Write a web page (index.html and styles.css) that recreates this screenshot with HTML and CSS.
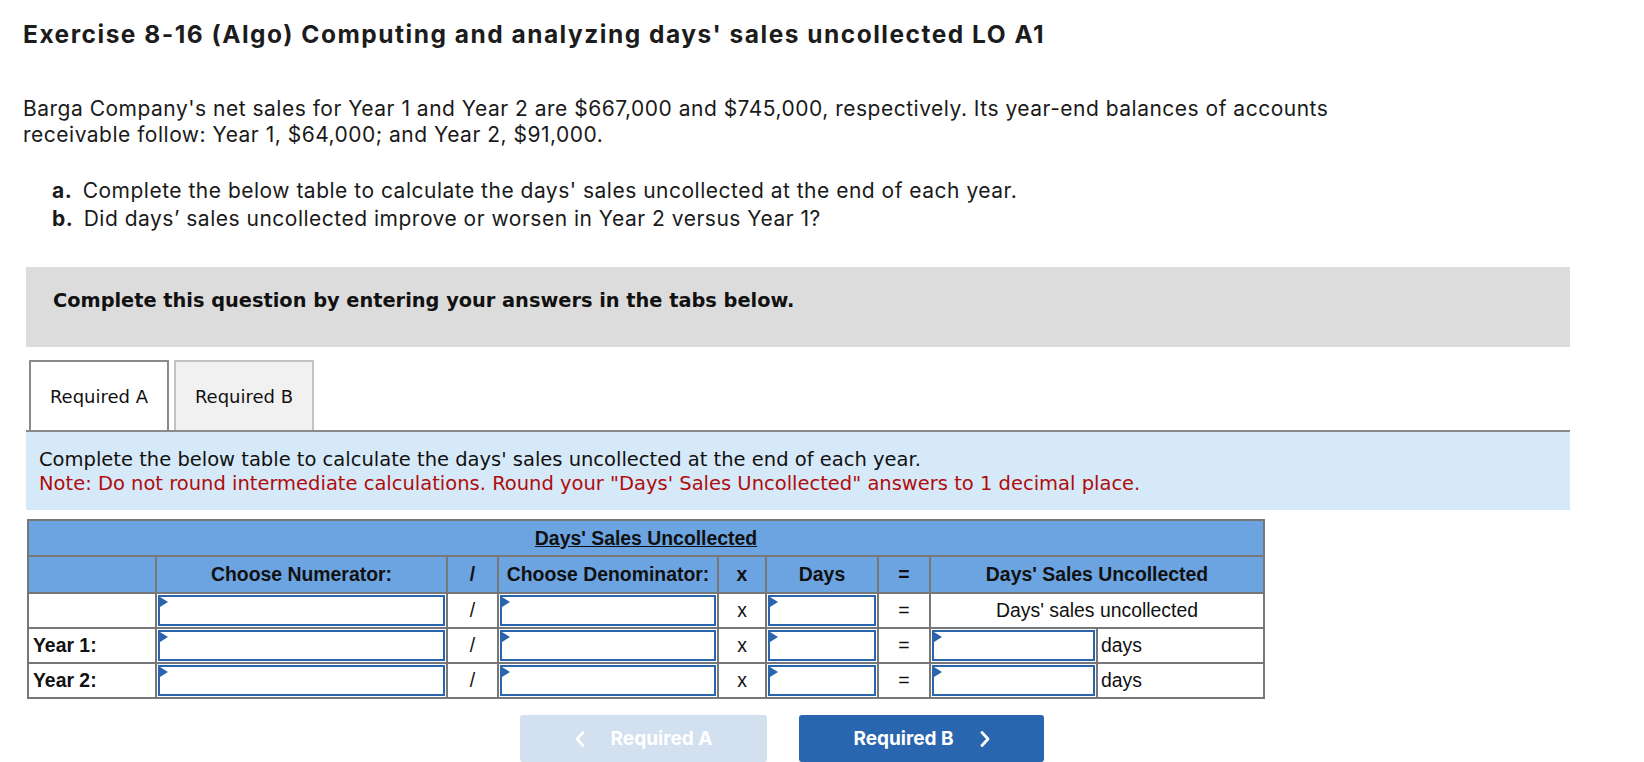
FILE: index.html
```html
<!DOCTYPE html>
<html>
<head>
<meta charset="utf-8">
<link rel="stylesheet" href="styles.css">
</head>
<body>
<div class="page">
  <h1 class="title">Exercise 8-16 (Algo) Computing and analyzing days' sales uncollected LO A1</h1>
  <p class="intro">Barga Company's net sales for Year 1 and Year 2 are $667,000 and $745,000, respectively. Its year-end balances of accounts receivable follow: Year 1, $64,000; and Year 2, $91,000.</p>
  <ol class="parts">
    <li><b>a.</b> Complete the below table to calculate the days' sales uncollected at the end of each year.</li>
    <li><b>b.</b> Did days’ sales uncollected improve or worsen in Year 2 versus Year 1?</li>
  </ol>

  <div class="banner">Complete this question by entering your answers in the tabs below.</div>

  <div class="tabs">
    <div class="tab active">Required A</div>
    <div class="tab">Required B</div>
  </div>

  <div class="info">
    <div>Complete the below table to calculate the days' sales uncollected at the end of each year.</div>
    <div class="note">Note: Do not round intermediate calculations. Round your "Days' Sales Uncollected" answers to 1 decimal place.</div>
  </div>

  <table class="grid">
    <colgroup>
      <col class="c-label"><col class="c-num"><col class="c-op1"><col class="c-den"><col class="c-op2"><col class="c-days"><col class="c-op3"><col class="c-res"><col class="c-unit">
    </colgroup>
    <tr class="h1"><th colspan="9"><u>Days' Sales Uncollected</u></th></tr>
    <tr class="h2">
      <th></th>
      <th>Choose Numerator:</th>
      <th>/</th>
      <th>Choose Denominator:</th>
      <th>x</th>
      <th>Days</th>
      <th>=</th>
      <th colspan="2">Days' Sales Uncollected</th>
    </tr>
    <tr>
      <td class="lbl"></td>
      <td class="in"><div class="box"></div></td>
      <td class="op">/</td>
      <td class="in"><div class="box"></div></td>
      <td class="op">x</td>
      <td class="in"><div class="box"></div></td>
      <td class="op">=</td>
      <td colspan="2" class="op">Days' sales uncollected</td>
    </tr>
    <tr>
      <td class="lbl">Year 1:</td>
      <td class="in"><div class="box"></div></td>
      <td class="op">/</td>
      <td class="in"><div class="box"></div></td>
      <td class="op">x</td>
      <td class="in"><div class="box"></div></td>
      <td class="op">=</td>
      <td class="in"><div class="box"></div></td>
      <td class="unit">days</td>
    </tr>
    <tr>
      <td class="lbl">Year 2:</td>
      <td class="in"><div class="box"></div></td>
      <td class="op">/</td>
      <td class="in"><div class="box"></div></td>
      <td class="op">x</td>
      <td class="in"><div class="box"></div></td>
      <td class="op">=</td>
      <td class="in"><div class="box"></div></td>
      <td class="unit">days</td>
    </tr>
  </table>

  <div class="nav">
    <div class="btn disabled">
      <svg class="chev left" width="10" height="16" viewBox="0 0 10 16"><polyline points="8,1.5 2,8 8,14.5" fill="none" stroke="#fff" stroke-width="2.8" stroke-linecap="round" stroke-linejoin="round"/></svg>
      <span>Required A</span>
    </div>
    <div class="btn primary">
      <span>Required B</span>
      <svg class="chev right" width="10" height="16" viewBox="0 0 10 16"><polyline points="2,1.5 8,8 2,14.5" fill="none" stroke="#fff" stroke-width="2.8" stroke-linecap="round" stroke-linejoin="round"/></svg>
    </div>
  </div>
</div>
</body>
</html>
```

FILE: styles.css
```css
html, body {
  margin: 0;
  padding: 0;
  background: #ffffff;
}
.page {
  padding: 0 0 0 23px;
  width: 1547px;
  font-family: Inter, "Open Sans", sans-serif;
  color: #1a1a1a;
}
.title {
  margin: 0;
  padding-top: 19px;
  font-size: 24.5px;
  line-height: 30px;
  font-weight: 700;
  letter-spacing: 1.5px;
  color: #1c1c1c;
}
.intro {
  margin: 47px 0 0 0;
  font-size: 21px;
  letter-spacing: 0.5px;
  line-height: 26px;
  width: 1340px;
}
.parts {
  list-style: none;
  margin: 29px 0 0 0;
  padding: 0 0 0 29px;
  font-size: 21px;
  letter-spacing: 0.5px;
  line-height: 28px;
}
.parts b {
  font-weight: 700;
  margin-right: 4px;
}
.banner {
  margin: 34px 0 0 3px;
  width: 1544px;
  height: 80px;
  box-sizing: border-box;
  background: #dcdcdc;
  padding: 21px 0 0 27px;
  font-family: "DejaVu Sans", Verdana, sans-serif;
  font-weight: 700;
  font-size: 19.35px;
  line-height: 26px;
  color: #111;
}
.tabs {
  margin: 13px 0 0 6px;
  display: flex;
  gap: 5px;
  height: 70px;
}
.tab {
  width: 140px;
  box-sizing: border-box;
  display: flex;
  align-items: center;
  justify-content: center;
  font-family: "DejaVu Sans", Verdana, sans-serif;
  font-size: 18px;
  color: #111;
  background: #f1f1f1;
  border: 2px solid #c3c3c3;
  border-bottom: none;
}
.tab.active {
  background: #fff;
  border-color: #8a8a8a;
}
.info {
  margin: 0 0 0 3px;
  width: 1544px;
  box-sizing: border-box;
  border-top: 2px solid #8a8a8a;
  background: #d6e9f8;
  padding: 16px 13px 14px;
  font-family: "DejaVu Sans", Verdana, sans-serif;
  font-size: 19.5px;
  line-height: 24px;
  color: #111;
}
.note {
  color: #b00c0c;
}
.grid {
  margin: 9px 0 0 4px;
  border-collapse: collapse;
  table-layout: fixed;
  width: 1236px;
  font-family: "Liberation Sans", Arial, sans-serif;
  border: 2px solid #777;
}
.c-label { width: 128px; }
.c-num { width: 291px; }
.c-op1 { width: 51px; }
.c-den { width: 220px; }
.c-op2 { width: 48px; }
.c-days { width: 112px; }
.c-op3 { width: 52px; }
.c-res { width: 167px; }
.c-unit { width: 167px; }
.grid th, .grid td {
  border: 2px solid #777;
  padding: 0;
}
.grid th {
  background: #6ca4e1;
  font-size: 19.4px;
  font-weight: 700;
  color: #111;
}
.grid .h1 th {
  height: 34px;
}
.grid .h2 th {
  height: 35px;
}
.grid td {
  height: 31px;
  font-size: 19.4px;
  color: #111;
}
.grid td.lbl {
  font-weight: 700;
  padding-left: 4px;
}
.grid td.op {
  text-align: center;
}
.grid td.unit {
  padding-left: 3px;
}
.grid td.in {
  padding: 1px;
}
.box {
  position: relative;
  height: 27px;
  border: 2px solid #2a64ad;
  background: #fff;
}
.box::before {
  content: "";
  position: absolute;
  left: 0;
  top: 0;
  border-left: 8px solid #2a64ad;
  border-top: 5px solid transparent;
  border-bottom: 5px solid transparent;
}
.nav {
  margin: 16px 0 0 497px;
  display: flex;
  gap: 32px;
}
.btn {
  width: 247px;
  height: 47px;
  border-radius: 3px;
  display: flex;
  align-items: center;
  justify-content: center;
  font-family: Inter, "Open Sans", sans-serif;
  font-weight: 700;
  font-size: 19px;
  color: #fff;
}
.btn.disabled {
  background: #d3e0ef;
}
.btn.primary {
  background: #2a66b0;
  width: 245px;
}
.chev.left {
  margin-right: 26px;
}
.chev.right {
  margin-left: 26px;
}
```
